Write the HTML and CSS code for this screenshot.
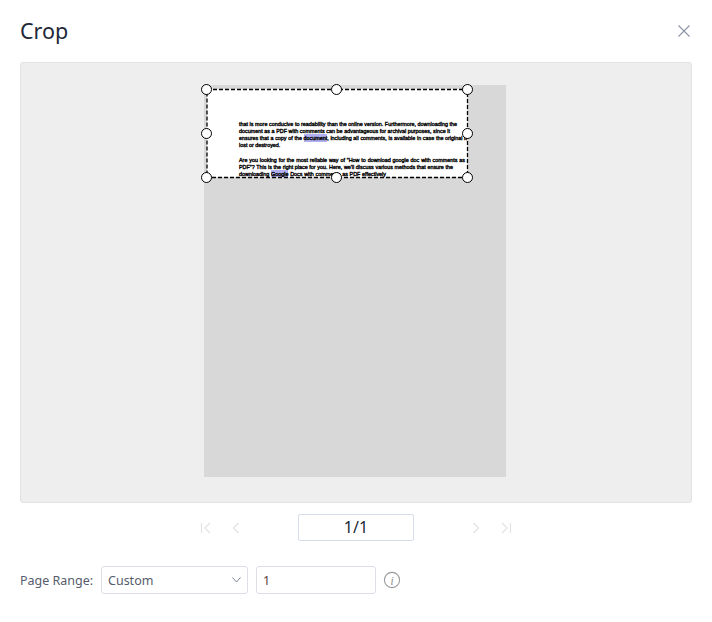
FILE: index.html
```html
<!DOCTYPE html>
<html lang="en">
<head>
<meta charset="utf-8">
<title>Crop</title>
<link rel="stylesheet" href="styles.css">
</head>
<body>
<div class="dialog">
  <header class="head">
    <h1 class="title">Crop</h1>
    <button class="close" aria-label="Close">
      <svg width="12" height="12" viewBox="0 0 12 12"><path d="M.5.5l11 11M11.5.5l-11 11" stroke="#8c93a3" stroke-width="1.1" fill="none"/></svg>
    </button>
  </header>
  <section class="preview">
    <div class="page">
      <div class="crop">
        <div class="doc">
          <div class="line w1">that is more conducive to readability than the online version. Furthermore, downloading the</div>
          <div class="line w2">document as a PDF with comments can be advantageous for archival purposes, since it</div>
          <div class="line w3">ensures that a copy of the <mark class="hl">document</mark>, including all comments, is available in case the original is</div>
          <div class="line w4">lost or destroyed.</div>
          <div class="line gap w5">Are you looking for the most reliable way of "How to download google doc with comments as</div>
          <div class="line w6">PDF"? This is the right place for you. Here, we'll discuss various methods that ensure the</div>
          <div class="line w7">downloading <mark class="hl">Google</mark> Docs with comments as PDF effectively</div>
        </div>
        <svg class="dash" width="264" height="92" viewBox="0 0 264 92"><rect x="2" y="2.500" width="260.500" height="88" fill="none" stroke="#000" stroke-width="1.300" stroke-dasharray="4 2"/></svg>
        <i class="h tl"></i><i class="h tc"></i><i class="h tr"></i>
        <i class="h ml"></i><i class="h mr"></i>
        <i class="h bl"></i><i class="h bc"></i><i class="h br"></i>
      </div>
    </div>
  </section>
  <nav class="pager">
    <div class="arrows left">
      <svg width="12" height="12" viewBox="0 0 12 12"><path d="M1.500 1v10M10 1L5 6l5 5" stroke="#e2e2e2" stroke-width="1.200" fill="none"/></svg>
      <svg width="12" height="12" viewBox="0 0 12 12"><path d="M8.500 1L3.500 6l5 5" stroke="#e2e2e2" stroke-width="1.200" fill="none"/></svg>
    </div>
    <div class="pagebox">1/1</div>
    <div class="arrows right">
      <svg width="12" height="12" viewBox="0 0 12 12"><path d="M3.500 1l5 5-5 5" stroke="#e2e2e2" stroke-width="1.200" fill="none"/></svg>
      <svg width="12" height="12" viewBox="0 0 12 12"><path d="M2 1l5 5-5 5M10.500 1v10" stroke="#e2e2e2" stroke-width="1.200" fill="none"/></svg>
    </div>
  </nav>
  <div class="range">
    <span class="label">Page Range:</span>
    <div class="field select">
      <span>Custom</span>
      <svg width="9" height="6" viewBox="0 0 9 6"><path d="M.5.5L4.500 5 8.500.5" stroke="#7d8494" stroke-width="1" fill="none"/></svg>
    </div>
    <div class="field value">1</div>
    <svg class="info" width="18" height="18" viewBox="0 0 18 18"><circle cx="9" cy="9" r="7.600" fill="none" stroke="#9a9a9a" stroke-width="1.100"/><text x="9" y="13.500" text-anchor="middle" class="info-i">i</text></svg>
  </div>
</div>
</body>
</html>
```
FILE: styles.css
```css
* { box-sizing: border-box; }
html, body { margin: 0; padding: 0; background: #fff; }
body { font-family: "Noto Sans", "Open Sans", sans-serif; }
.dialog { width: 712px; height: 622px; padding: 0 20px; display: flex; flex-direction: column; }
.head { height: 62px; display: flex; align-items: flex-start; justify-content: space-between; flex: none; }
.title { margin: 16px 0 0; font-size: 21.500px; line-height: 30px; font-weight: 400; color: #1d2838; }
.close { margin: 25px 2px 0 0; padding: 0; border: 0; background: none; width: 12px; height: 12px; display: block; line-height: 0; }
.preview { height: 441px; flex: none; background: #eeeeee; border: 1px solid #e3e3e3; border-radius: 3px; padding-top: 22px; display: flex; justify-content: center; }
.page { width: 302px; height: 392px; background: #d8d8d8; position: relative; margin-left: -2px; }
.crop { position: absolute; left: 3px; top: 4px; width: 260px; height: 88px; background: #fff; }
.doc { position: absolute; inset: 0; overflow: hidden; padding: 32px 0 0 32px; font-family: "Liberation Sans", Arial, sans-serif; font-size: 5.400px; line-height: 7px; color: #000; -webkit-text-stroke: 0.350px #000; }
.line { white-space: nowrap; text-align: justify; text-align-last: justify; }
.gap { margin-top: 8px; }
.w1 { width: 218px; }
.w2 { width: 211px; }
.w3 { width: 229px; }
.w4 { width: 40px; text-align-last: left; }
.w5 { width: 226px; }
.w6 { width: 214px; }
.w7 { width: 147px; }
.hl { background: #b0b0f2; color: #000; padding: 1px 0; }
.dash { position: absolute; left: -2px; top: -2px; }
.h { position: absolute; width: 11px; height: 11px; border: 1px solid #000; border-radius: 50%; background: #fff; }
.tl, .tc, .tr { top: -5px; }
.ml, .mr { top: 39px; }
.bl, .bc, .br { top: 83px; }
.tl, .ml, .bl { left: -6px; }
.tc, .bc { left: 124px; }
.tr, .mr, .br { left: 255px; }
.pager { height: 27px; margin-top: 11px; flex: none; display: flex; justify-content: center; align-items: center; }
.arrows { width: 158px; display: flex; gap: 18px; align-items: center; }
.arrows.left { justify-content: flex-end; padding-right: 56px; }
.arrows.right { justify-content: flex-start; padding-left: 56px; }
.pagebox { width: 116px; height: 27px; flex: none; border: 1px solid #d5dcea; border-radius: 2px; text-align: center; font-size: 16px; line-height: 25px; color: #1d2838; }
.range { margin-top: 25px; height: 28px; display: flex; align-items: center; flex: none; font-size: 12.500px; color: #555c6b; }
.label { width: 81px; }
.field { height: 28px; border: 1px solid #dcdfe6; border-radius: 3px; display: flex; align-items: center; padding: 0 6px; }
.select { width: 147px; justify-content: space-between; margin-right: 8px; }
.value { width: 120px; color: #5d4037; margin-right: 7px; }
.info { display: block; }
.info-i { font-family: "Liberation Serif", serif; font-size: 13px; font-style: italic; fill: #9a9a9a; }
```
